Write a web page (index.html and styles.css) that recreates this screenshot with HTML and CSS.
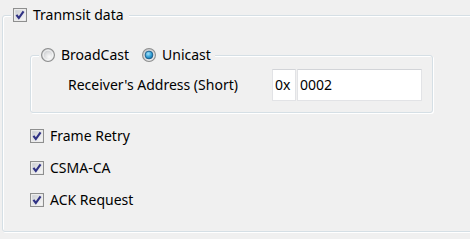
FILE: index.html
```html
<!DOCTYPE html>
<html>
<head>
<meta charset="utf-8">
<link rel="stylesheet" href="styles.css">
</head>
<body>
<svg class="defs" width="0" height="0" aria-hidden="true">
  <defs>
    <linearGradient id="cbg" x1="0" y1="0" x2="1" y2="1">
      <stop offset="0" stop-color="#cbced3"/>
      <stop offset="1" stop-color="#f6f6f6"/>
    </linearGradient>
    <radialGradient id="rbg" cx="0.6" cy="0.65" r="0.6">
      <stop offset="0" stop-color="#fbfbfb"/>
      <stop offset="1" stop-color="#c9cbce"/>
    </radialGradient>
    <radialGradient id="rdot" cx="0.4" cy="0.35" r="0.7">
      <stop offset="0" stop-color="#a6e3fb"/>
      <stop offset="0.6" stop-color="#2f9ed5"/>
      <stop offset="1" stop-color="#19699e"/>
    </radialGradient>
    <symbol id="chk" viewBox="0 0 13 13">
      <rect x="0.5" y="0.5" width="12" height="12" fill="#f4f4f4" stroke="#8e8f8f"/>
      <rect x="2" y="2" width="9" height="9" fill="url(#cbg)"/>
      <path d="M3.2 6.4 L5.4 9.3 L9.8 3.2" fill="none" stroke="#2f3184" stroke-width="2"/>
    </symbol>
    <symbol id="rad" viewBox="0 0 13 13">
      <circle cx="6.5" cy="6.5" r="6" fill="url(#rbg)" stroke="#8e8f8f"/>
      <circle cx="6.5" cy="6.5" r="4.5" fill="none" stroke="#f8f8f8" stroke-width="0.8"/>
    </symbol>
    <symbol id="radon" viewBox="0 0 13 13">
      <circle cx="6.5" cy="6.5" r="6" fill="url(#rbg)" stroke="#8e8f8f"/>
      <circle cx="6.5" cy="6.5" r="3.6" fill="url(#rdot)" stroke="#1c5a86" stroke-width="0.8"/>
    </symbol>
  </defs>
</svg>

<fieldset class="group outer">
  <legend class="outer-legend">
    <span class="lg">
      <svg class="box" viewBox="0 0 13 13"><use href="#chk"/></svg>
      <span>Tranmsit data</span>
    </span>
  </legend>

  <fieldset class="group inner">
    <legend class="inner-legend">
      <span class="lg">
        <svg class="box" viewBox="0 0 13 13"><use href="#rad"/></svg>
        <span class="rtext">BroadCast</span>
        <svg class="box" viewBox="0 0 13 13"><use href="#radon"/></svg>
        <span>Unicast</span>
      </span>
    </legend>
    <div class="addr-row">
      <span class="addr-label">Receiver's Address (Short)</span>
      <div class="field f-prefix">0x</div>
      <div class="field f-value">0002</div>
    </div>
  </fieldset>

  <div class="opt first">
    <svg class="box" viewBox="0 0 13 13"><use href="#chk"/></svg>
    <span>Frame Retry</span>
  </div>
  <div class="opt">
    <svg class="box" viewBox="0 0 13 13"><use href="#chk"/></svg>
    <span>CSMA-CA</span>
  </div>
  <div class="opt">
    <svg class="box" viewBox="0 0 13 13"><use href="#chk"/></svg>
    <span>ACK Request</span>
  </div>
</fieldset>
</body>
</html>
```

FILE: styles.css
```css
html, body {
  margin: 0;
  padding: 0;
  background: #f0f0f0;
}

body {
  width: 470px;
  height: 239px;
  overflow: hidden;
  font-family: "Noto Sans", "Open Sans", sans-serif;
  font-size: 14px;
  line-height: 16px;
  color: #000;
}

.defs {
  display: block;
  width: 0;
  height: 0;
  overflow: hidden;
}

.group {
  margin: 0;
  padding: 0;
  min-width: 0;
  border: 1px solid #d5dfe5;
  border-radius: 3px;
  box-shadow: inset 1px 1px 0 #fff, 1px 1px 0 #fff;
}

.outer {
  margin: 7px -14px 0 2px;
  padding: 0 0 23px 0;
}

legend {
  background: #f0f0f0;
  height: 16px;
}

.outer-legend {
  margin-left: 8px;
  padding: 0 5px 0 2px;
}

.inner-legend {
  margin-left: 8px;
  padding: 0 4px 0 2px;
}

.lg {
  display: flex;
  align-items: center;
  height: 16px;
  gap: 6px;
}

.box {
  display: block;
  width: 14px;
  height: 14px;
  flex: none;
}

.rtext {
  margin-right: 7px;
}

.inner {
  box-sizing: border-box;
  width: 403px;
  margin: 24px 0 0 27px;
  padding: 6px 0 11px 0;
}

.addr-row {
  display: flex;
  align-items: center;
  height: 32px;
  padding-left: 37px;
}

.addr-label {
  width: 204px;
  flex: none;
}

.field {
  box-sizing: border-box;
  height: 32px;
  background: #fff;
  border: 1px solid #e2e3e6;
  border-top-color: #d2d4d8;
  display: flex;
  align-items: center;
  padding-left: 2px;
}

.f-prefix {
  width: 24px;
  margin-right: 1px;
}

.f-value {
  width: 125px;
}

.opt {
  display: flex;
  align-items: center;
  gap: 6px;
  height: 16px;
  margin: 16px 0 0 27px;
}

.opt.first {
  margin-top: 15px;
}
```
